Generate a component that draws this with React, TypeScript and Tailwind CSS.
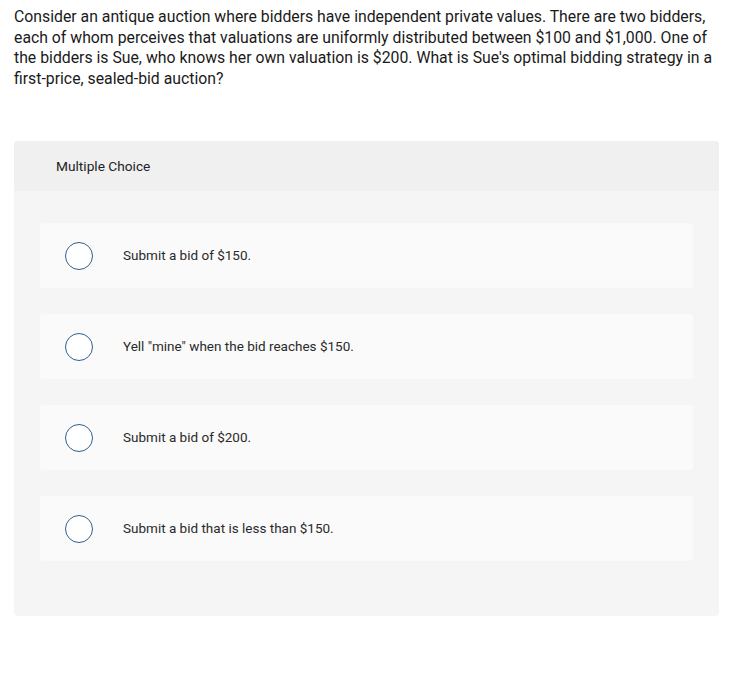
const options = [
  "Submit a bid of $150.",
  'Yell "mine" when the bid reaches $150.',
  "Submit a bid of $200.",
  "Submit a bid that is less than $150.",
]

export default function App() {
  return (
    <div className="min-h-screen bg-white font-['Roboto',sans-serif] text-[#1a1a1a]">
      <p className="whitespace-nowrap px-[14px] pt-[7px] text-[15.8px] leading-[20.5px]">
        Consider an antique auction where bidders have independent private values. There are two bidders,
        <br />
        each of whom perceives that valuations are uniformly distributed between $100 and $1,000. One of
        <br />
        the bidders is Sue, who knows her own valuation is $200. What is Sue's optimal bidding strategy in a
        <br />
        first-price, sealed-bid auction?
      </p>

      <div className="mx-[14px] mt-[52px] w-[705px] overflow-hidden rounded-[4px] bg-[#f5f5f5]">
        <div className="flex h-[50px] items-center bg-[#f0f0f0] pl-[42px] text-[13.7px] text-[#222]">Multiple Choice</div>
        <div className="flex flex-col gap-[26px] px-[26px] pb-[55px] pt-[32px]">
          {options.map((opt) => (
            <label key={opt} className="flex h-[65px] cursor-pointer items-center rounded-[4px] bg-[#fafafa] pl-[25px]">
              <span className="h-[28px] w-[28px] shrink-0 rounded-full border-[1.5px] border-[#2f5f8c] bg-white" />
              <span className="ml-[30px] text-[13.5px] text-[#2a2a2a]">{opt}</span>
            </label>
          ))}
        </div>
      </div>
    </div>
  )
}
